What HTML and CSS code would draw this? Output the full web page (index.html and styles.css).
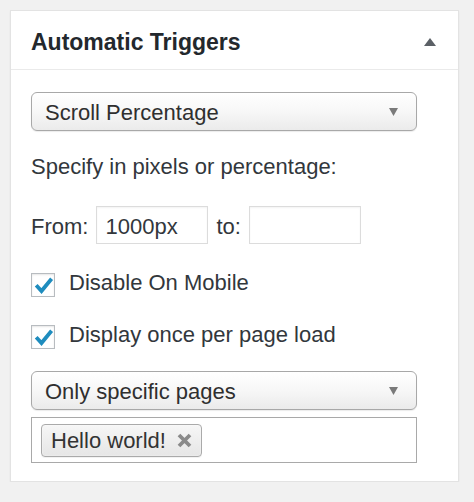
FILE: index.html
```html
<!DOCTYPE html>
<html>
<head>
<meta charset="utf-8">
<link rel="stylesheet" href="styles.css">
</head>
<body>
<div class="wrap">
  <div class="postbox">
    <div class="hndle">
      <h2 class="title">Automatic Triggers</h2>
      <svg class="toggle" width="12" height="8" viewBox="0 0 12 8"><polygon points="6,0 12,8 0,8" fill="#5b6066"/></svg>
    </div>
    <div class="inside">
      <div class="select">
        <span>Scroll Percentage</span>
        <svg class="caret" width="9" height="8" viewBox="0 0 9 8"><polygon points="0,0 9,0 4.5,8" fill="#7a7a7a"/></svg>
      </div>
      <p class="hint">Specify in pixels or percentage:</p>
      <div class="range">
        <span class="lbl">From:</span>
        <input class="field" type="text" value="1000px">
        <span class="lbl">to:</span>
        <input class="field" type="text" value="">
      </div>
      <div class="check first">
        <span class="box"><svg width="22" height="22" viewBox="0 0 22 22"><path d="M4.2 11.2 L9.5 17 L19.6 4.8" fill="none" stroke="#1e8cbe" stroke-width="3.8" stroke-linejoin="miter"/></svg></span>
        <span class="clabel">Disable On Mobile</span>
      </div>
      <div class="check">
        <span class="box"><svg width="22" height="22" viewBox="0 0 22 22"><path d="M4.2 11.2 L9.5 17 L19.6 4.8" fill="none" stroke="#1e8cbe" stroke-width="3.8" stroke-linejoin="miter"/></svg></span>
        <span class="clabel">Display once per page load</span>
      </div>
      <div class="select second">
        <span>Only specific pages</span>
        <svg class="caret" width="9" height="8" viewBox="0 0 9 8"><polygon points="0,0 9,0 4.5,8" fill="#7a7a7a"/></svg>
      </div>
      <div class="tags">
        <span class="tag">Hello world!<svg class="remove" width="15" height="15" viewBox="0 0 15 15"><path d="M2 2 L13 13 M13 2 L2 13" stroke="#8a8a8a" stroke-width="3.8" fill="none"/></svg></span>
      </div>
    </div>
  </div>
</div>
</body>
</html>
```

FILE: styles.css
```css
html, body {
  margin: 0;
  padding: 0;
  background: #f1f1f1;
}
body {
  font-family: "Liberation Sans", Arial, sans-serif;
  font-size: 22px;
  color: #32373c;
}
.wrap {
  padding: 10px 0 0 10px;
}
.postbox {
  box-sizing: border-box;
  width: 449px;
  background: #fff;
  border: 1px solid #e3e3e3;
  box-shadow: 0 1px 2px rgba(0, 0, 0, 0.05);
}
.hndle {
  display: flex;
  align-items: center;
  justify-content: space-between;
  height: 58px;
  padding: 0 22px 0 20px;
  border-bottom: 1px solid #eaeaea;
}
.title {
  margin: 0;
  padding-top: 4px;
  font-size: 23px;
  font-weight: bold;
  line-height: 26px;
  color: #23282d;
}
.toggle {
  display: block;
  margin-top: 4px;
}
.inside {
  padding: 22px 20px 18px 20px;
}
.select {
  box-sizing: border-box;
  width: 386px;
  height: 39px;
  display: flex;
  align-items: center;
  justify-content: space-between;
  padding: 0 18px 0 13px;
  border: 1px solid #a8a8a8;
  border-radius: 6px;
  background: linear-gradient(to bottom, #ffffff 0%, #f7f7f7 50%, #ebebeb 100%);
  box-shadow: 0 1px 1px rgba(0, 0, 0, 0.08);
  line-height: 37px;
  color: #2f2f2f;
}
.select span {
  padding-top: 1px;
}
.caret {
  display: block;
}
.hint {
  margin: 23px 0 0 0;
  line-height: 26px;
}
.range {
  display: flex;
  align-items: baseline;
  gap: 8px;
  margin-top: 26px;
}
.lbl {
  line-height: 26px;
}
.field {
  box-sizing: border-box;
  width: 112px;
  height: 38px;
  margin: 0;
  padding: 4px 7px 0 8px;
  border: 1px solid #dcdcdc;
  background: #fff;
  box-shadow: inset 0 1px 2px rgba(0, 0, 0, 0.05);
  font-family: "Liberation Sans", Arial, sans-serif;
  font-size: 22px;
  color: #32373c;
  outline: none;
  border-radius: 0;
}
.check {
  display: flex;
  align-items: flex-start;
  gap: 14px;
  margin-top: 28px;
}
.check.first {
  margin-top: 29px;
}
.box {
  box-sizing: border-box;
  width: 24px;
  height: 24px;
  border: 1px solid #b8bcc0;
  background: #fff;
  box-shadow: inset 0 1px 2px rgba(0, 0, 0, 0.1);
  display: flex;
}
.box svg {
  display: block;
}
.clabel {
  line-height: 20px;
}
.select.second {
  margin-top: 22px;
}
.tags {
  box-sizing: border-box;
  width: 386px;
  height: 46px;
  margin-top: 7px;
  padding: 6px 9px;
  border: 1px solid #a9a9a9;
  background: #fff;
}
.tag {
  box-sizing: border-box;
  display: inline-flex;
  align-items: center;
  gap: 11px;
  height: 33px;
  padding: 0 9px 0 9px;
  border: 1px solid #aaaaaa;
  border-radius: 4px;
  background: linear-gradient(to bottom, #f6f6f6 0%, #eeeeee 50%, #e6e6e6 100%);
  box-shadow: 0 0 2px rgba(255, 255, 255, 0.8) inset, 0 1px 0 rgba(0, 0, 0, 0.05);
  line-height: 31px;
  color: #333;
}
.remove {
  display: block;
}
```
